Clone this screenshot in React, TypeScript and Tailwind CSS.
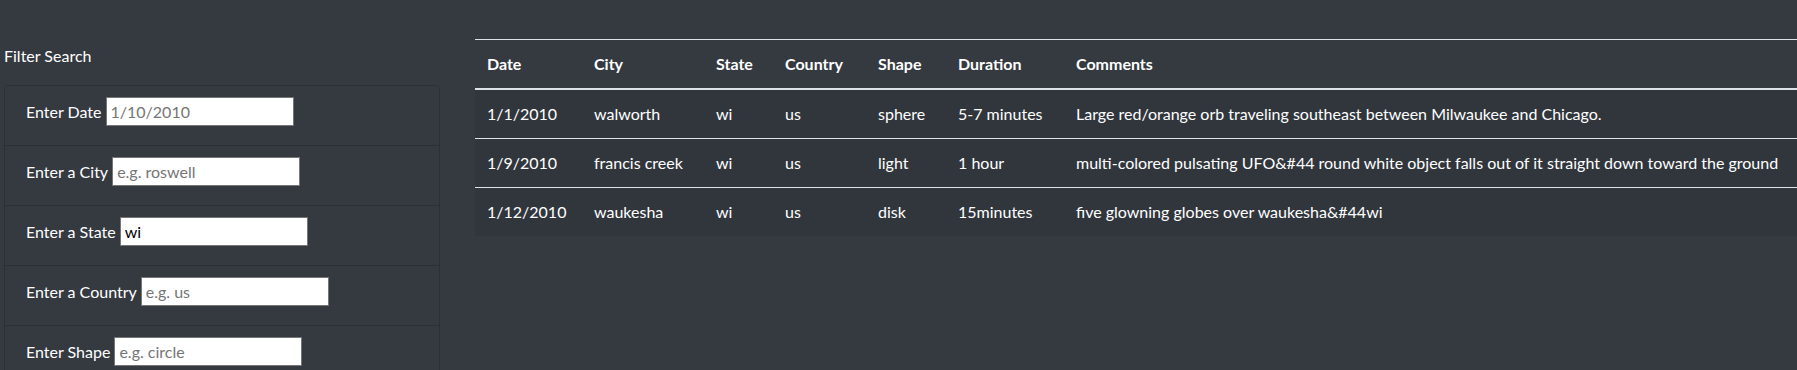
import React from "react";

interface Sighting {
  datetime: string;
  city: string;
  state: string;
  country: string;
  shape: string;
  durationMinutes: string;
  comments: string;
}

const sightings: Sighting[] = [
  {
    datetime: "1/1/2010",
    city: "walworth",
    state: "wi",
    country: "us",
    shape: "sphere",
    durationMinutes: "5-7 minutes",
    comments: "Large red/orange orb traveling southeast between Milwaukee and Chicago.",
  },
  {
    datetime: "1/9/2010",
    city: "francis creek",
    state: "wi",
    country: "us",
    shape: "light",
    durationMinutes: "1 hour",
    comments:
      "multi-colored pulsating UFO&#44 round white object falls out of it straight down toward the ground",
  },
  {
    datetime: "1/12/2010",
    city: "waukesha",
    state: "wi",
    country: "us",
    shape: "disk",
    durationMinutes: "15minutes",
    comments: "five glowning globes over waukesha&#44wi",
  },
];

const filters = [
  { id: "datetime", label: "Enter Date", placeholder: "1/10/2010", value: "" },
  { id: "city", label: "Enter a City", placeholder: "e.g. roswell", value: "" },
  { id: "state", label: "Enter a State", placeholder: "e.g. ca", value: "wi" },
  { id: "country", label: "Enter a Country", placeholder: "e.g. us", value: "" },
  { id: "shape", label: "Enter Shape", placeholder: "e.g. circle", value: "" },
];

// widths measured off the page, cells are border-box so padding is included
const columns = [
  { name: "Date", width: "w-[107px]" },
  { name: "City", width: "w-[122px]" },
  { name: "State", width: "w-[69px]" },
  { name: "Country", width: "w-[93px]" },
  { name: "Shape", width: "w-[80px]" },
  { name: "Duration", width: "w-[118px]" },
  { name: "Comments", width: "w-[733px]" },
];

function FilterPanel() {
  return (
    <aside className="w-[440px] shrink-0 pl-1 pt-[44px]">
      <h5 className="text-[16px] leading-[24px] text-white">Filter Search</h5>
      <ul className="mt-[17px] rounded-[4px] border border-[#2c3036]">
        {filters.map((filter, i) => (
          <li
            key={filter.id}
            className={`flex h-[60px] items-start px-[21px] pt-[11px] ${
              i < filters.length - 1 ? "border-b border-[#2c3036]" : ""
            }`}
          >
            <label htmlFor={filter.id} className="mt-[3px] text-[16px] leading-[24px] text-white">
              {filter.label}
            </label>
            <input
              id={filter.id}
              type="text"
              defaultValue={filter.value}
              placeholder={filter.placeholder}
              className="ml-[4px] h-[29px] w-[188px] border border-[#767676] bg-white px-[4px] text-[16px] text-black placeholder:text-[#757575] outline-none"
            />
          </li>
        ))}
      </ul>
    </aside>
  );
}

function SightingsTable() {
  return (
    <div className="ml-[35px] shrink-0 pt-[39px]">
      <table className="w-[1322px] table-fixed border-collapse text-[16px] leading-[24px] text-white">
        <thead>
          <tr className="border-t border-[#dee2e6]">
            {columns.map((col) => (
              <th
                key={col.name}
                className={`${col.width} border-b-2 border-[#dee2e6] p-[12px] text-left font-bold whitespace-nowrap`}
              >
                {col.name}
              </th>
            ))}
          </tr>
        </thead>
        <tbody className="bg-[#31363d]">
          {sightings.map((s, i) => (
            <tr
              key={s.datetime}
              className={i < sightings.length - 1 ? "border-b border-[#dee2e6]" : ""}
            >
              <td className="p-[12px] whitespace-nowrap">{s.datetime}</td>
              <td className="p-[12px] whitespace-nowrap">{s.city}</td>
              <td className="p-[12px] whitespace-nowrap">{s.state}</td>
              <td className="p-[12px] whitespace-nowrap">{s.country}</td>
              <td className="p-[12px] whitespace-nowrap">{s.shape}</td>
              <td className="p-[12px] whitespace-nowrap">{s.durationMinutes}</td>
              <td className="p-[12px] whitespace-nowrap">{s.comments}</td>
            </tr>
          ))}
        </tbody>
      </table>
    </div>
  );
}

export default function App() {
  return (
    <div
      className="flex min-h-[370px] w-full overflow-hidden bg-[#353a41]"
      style={{ fontFamily: "Lato, 'Noto Sans', sans-serif" }}
    >
      <FilterPanel />
      <SightingsTable />
    </div>
  );
}
